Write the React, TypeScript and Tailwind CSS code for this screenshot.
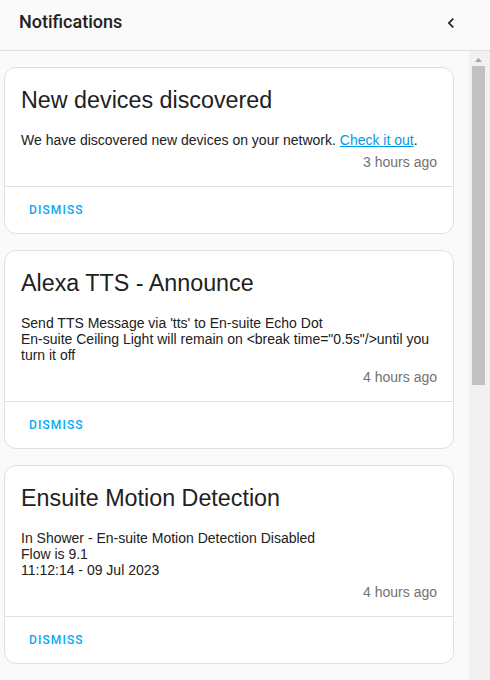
import React from 'react'

// Notifications drawer — three persistent notifications, classic scrollbar on the right.

type Note = { title: string; body: React.ReactNode; time: string }

const NOTES: Note[] = [
  {
    title: 'New devices discovered',
    body: (
      <>
        We have discovered new devices on your network.{' '}
        <a href="#" className="text-[#039be5] underline">Check it out</a>.
      </>
    ),
    time: '3 hours ago',
  },
  {
    title: 'Alexa TTS - Announce',
    body: "Send TTS Message via 'tts' to En-suite Echo Dot\nEn-suite Ceiling Light will remain on <break time=\"0.5s\"/>until you turn it off",
    time: '4 hours ago',
  },
  {
    title: 'Ensuite Motion Detection',
    body: 'In Shower - En-suite Motion Detection Disabled\nFlow is 9.1\n11:12:14 - 09 Jul 2023',
    time: '4 hours ago',
  },
]

function ChevronLeft() {
  return (
    <svg width="20" height="20" viewBox="0 0 24 24" className="mt-[3px] shrink-0">
      <path d="M15.41,16.58L10.83,12L15.41,7.41L14,6L8,12L14,18L15.41,16.58Z" fill="#212121" />
    </svg>
  )
}

function NoteCard({ note }: { note: Note }) {
  return (
    <div className="w-[450px] shrink-0 rounded-[12px] border border-[#e0e0e0] bg-white">
      <div className="px-4 pt-4 pb-4 font-['Liberation_Sans',Arial,sans-serif] text-[#212121]">
        <div className="text-[23.3px] leading-[32px]">{note.title}</div>
        <div className="mt-4 whitespace-pre-line text-[14px] leading-[16px]">{note.body}</div>
        <div className="mt-[6px] text-right text-[14px] leading-[16px] text-[#727272]">{note.time}</div>
      </div>
      <div className="flex h-[47px] items-center border-t border-[#e0e0e0] pl-[24px]">
        <button className="font-['Roboto',sans-serif] text-[12px] font-medium uppercase tracking-[1.1px] text-[#03a9f4]">
          Dismiss
        </button>
      </div>
    </div>
  )
}

function Scrollbar() {
  return (
    <div className="flex w-[21px] shrink-0 flex-col bg-[#f1f1f1]">
      <div className="h-[15px] pl-[6px] pt-[7px]">
        <svg width="7" height="4" viewBox="0 0 7 4" className="block">
          <polygon points="0,4 3.5,0 7,4" fill="#a3a3a3" />
        </svg>
      </div>
      <div className="ml-[3px] h-[319px] w-[13px] bg-[#c1c1c1]" />
    </div>
  )
}

export default function App() {
  return (
    <div className="flex h-[680px] w-[490px] flex-col overflow-hidden bg-[#fafafa]">
      <header className="flex h-[51px] shrink-0 items-start justify-between border-b border-[#e0e0e0] pl-[19px] pr-[29px] pt-[10px]">
        <span className="font-['Roboto',sans-serif] text-[18px] font-medium leading-6 text-[#212121]">Notifications</span>
        <ChevronLeft />
      </header>
      <div className="flex min-h-0 flex-1">
        <div className="flex flex-1 flex-col gap-4 overflow-hidden pl-1 pt-4">
          {NOTES.map((n) => (
            <NoteCard key={n.title} note={n} />
          ))}
        </div>
        <Scrollbar />
      </div>
    </div>
  )
}
